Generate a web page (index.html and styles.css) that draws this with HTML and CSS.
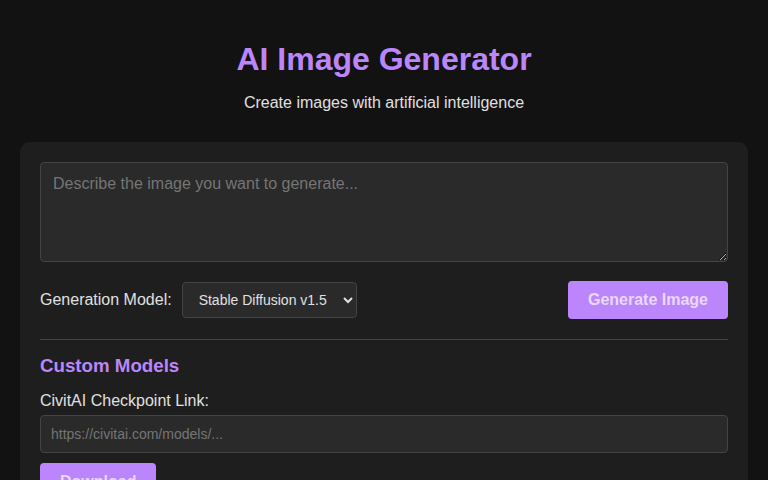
FILE: index.html
```html
<!DOCTYPE html>
<html lang="en">
<head>
  <meta charset="UTF-8" />
  <meta name="viewport" content="width=device-width, initial-scale=1.0"/>
  <title>AI Image Generator</title>
  <link rel="stylesheet" href="styles.css">
</head>
<body>
  <header class="page-header">
    <h1>AI Image Generator</h1>
    <p>Create images with artificial intelligence</p>
  </header>

  <div class="generator-card">
    <textarea id="prompt" class="prompt-input" placeholder="Describe the image you want to generate..."></textarea>

    <div class="controls-row">
      <div class="model-picker">
        <label for="model">Generation Model:</label>
        <select id="model" class="model-select">
          <option>Stable Diffusion v1.5</option>
          <option>Stable Diffusion XL</option>
        </select>
      </div>
      <button class="primary-btn" id="generateButton">Generate Image</button>
    </div>

    <hr class="divider">

    <h3>Custom Models</h3>
    <div class="form-group">
      <label for="civitai-link">CivitAI Checkpoint Link:</label>
      <input type="text" id="civitai-link" placeholder="https://civitai.com/models/...">
    </div>
    <button class="primary-btn" id="downloadButton">Download</button>
  </div>
</body>
</html>
```

FILE: styles.css
```css
body {
  margin: 0;
  padding: 20px;
  font-family: "Liberation Sans", Arial, sans-serif;
  background: #121212;
  color: #e0e0e0;
}

.page-header {
  text-align: center;
  margin-bottom: 30px;
}

.page-header h1 {
  margin: 21px 0 16px;
  font-size: 32px;
  color: #bb86fc;
}

.page-header p {
  margin: 0;
  font-size: 16px;
  color: #e0e0e0;
}

.generator-card {
  background: #1e1e1e;
  border-radius: 10px;
  padding: 20px;
}

.prompt-input {
  display: block;
  box-sizing: border-box;
  width: 100%;
  height: 100px;
  padding: 12px;
  background: #2a2a2a;
  color: #e0e0e0;
  border: 1px solid #444;
  border-radius: 4px;
  font-family: inherit;
  font-size: 16px;
  resize: vertical;
}

.prompt-input::placeholder,
.form-group input::placeholder {
  color: #757575;
}

.controls-row {
  display: flex;
  justify-content: space-between;
  align-items: center;
  margin-top: 19px;
}

.model-picker {
  display: flex;
  align-items: center;
  gap: 10px;
  font-size: 16px;
}

.model-select {
  height: 36px;
  width: 175px;
  padding: 0 8px 0 12px;
  background: #2a2a2a;
  color: #e0e0e0;
  border: 1px solid #444;
  border-radius: 4px;
  font-family: inherit;
  font-size: 14px;
}

.primary-btn {
  background: #bb86fc;
  color: #ead8fb;
  border: none;
  border-radius: 4px;
  padding: 10px 20px;
  font-family: inherit;
  font-size: 16px;
  font-weight: bold;
  cursor: pointer;
}

.primary-btn:hover {
  background: #a66ef5;
}

.divider {
  border: none;
  border-top: 1px solid #444;
  margin: 20px 0 0;
}

.generator-card h3 {
  margin: 15px 0 15px;
  font-size: 18.72px;
  color: #bb86fc;
}

.form-group label {
  display: block;
  margin-bottom: 5px;
  font-size: 16px;
}

.form-group input {
  display: block;
  box-sizing: border-box;
  width: 100%;
  height: 38px;
  padding: 0 10px;
  background: #2a2a2a;
  color: #e0e0e0;
  border: 1px solid #444;
  border-radius: 4px;
  font-family: inherit;
  font-size: 14px;
}

#downloadButton {
  margin-top: 10px;
}
```
